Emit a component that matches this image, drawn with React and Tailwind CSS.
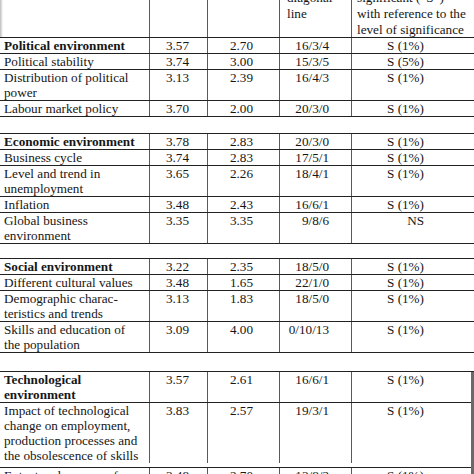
import React from "react";

const GRID = "grid grid-cols-[150px_58px_72px_72px_122px]";
const VB = "border-r border-[#5a5a5a]";

function Row({ lines, bold, a, b, c, d, extra = "", dClass = "" }) {
  return (
    <div className={`${GRID} border-b border-[#222] ${extra}`}>
      <div className={`${VB} pl-[4px] whitespace-nowrap ${bold ? "font-bold" : ""}`}>
        {lines.map((l, i) => (
          <div key={i}>{l}</div>
        ))}
      </div>
      <div className={`${VB} text-right pr-[18px]`}>{a}</div>
      <div className={`${VB} text-right pr-[26px]`}>{b}</div>
      <div className={`${VB} text-right pr-[22px]`}>{c}</div>
      <div className={`text-right pr-[50px] ${dClass}`}>{d}</div>
    </div>
  );
}

function Section({ children }) {
  return <div className="border-t border-[#222]">{children}</div>;
}

export default function App() {
  return (
    <div
      className="relative w-[474px] h-[474px] overflow-hidden bg-white text-[#161616] text-[13.2px] leading-[15px]"
      style={{ fontFamily: '"Liberation Serif", "Times New Roman", serif' }}
    >
      {/* header */}
      <div className={`${GRID} h-[38px] border-b border-[#222] overflow-hidden leading-[16px]`}>
        <div className={`${VB} bg-gradient-to-r from-[#bdbdbd] via-white to-white bg-[length:6px_100%] bg-no-repeat`}></div>
        <div className={VB}></div>
        <div className={VB}></div>
        <div className={`${VB} pl-[7px] -mt-[10px]`}>
          <div>diagonal</div>
          <div>line</div>
        </div>
        <div className="pl-[5px] -mt-[10px] whitespace-nowrap">
          <div>significant (“S”)</div>
          <div>with reference to the</div>
          <div>level of significance</div>
        </div>
      </div>

      <Row lines={["Political environment"]} bold a="3.57" b="2.70" c="16/3/4" d="S (1%)" />
      <Row lines={["Political stability"]} a="3.74" b="3.00" c="15/3/5" d="S (5%)" />
      <Row lines={["Distribution of political", "power"]} a="3.13" b="2.39" c="16/4/3" d="S (1%)" />
      <Row lines={["Labour market policy"]} a="3.70" b="2.00" c="20/3/0" d="S (1%)" />

      <div className="h-[16px]"></div>

      <Section>
        <Row lines={["Economic environment"]} bold a="3.78" b="2.83" c="20/3/0" d="S (1%)" />
        <Row lines={["Business cycle"]} a="3.74" b="2.83" c="17/5/1" d="S (1%)" />
        <Row lines={["Level and trend in", "unemployment"]} a="3.65" b="2.26" c="18/4/1" d="S (1%)" />
        <Row lines={["Inflation"]} a="3.48" b="2.43" c="16/6/1" d="S (1%)" />
        <Row lines={["Global business", "environment"]} a="3.35" b="3.35" c="9/8/6" d="NS" />
      </Section>

      <div className="h-[14px]"></div>

      <Section>
        <Row lines={["Social environment"]} bold a="3.22" b="2.35" c="18/5/0" d="S (1%)" />
        <Row lines={["Different cultural values"]} a="3.48" b="1.65" c="22/1/0" d="S (1%)" />
        <Row lines={["Demographic charac-", "teristics and trends"]} a="3.13" b="1.83" c="18/5/0" d="S (1%)" />
        <Row lines={["Skills and education of", "the population"]} a="3.09" b="4.00" c="0/10/13" d="S (1%)" />
      </Section>

      <div className="h-[18px]"></div>

      <Section>
        <div className="border-r-[3px] border-[#6a6a6a]">
          <Row lines={["Technological", "environment"]} bold a="3.57" b="2.61" c="16/6/1" d="S (1%)" />
          <Row
            lines={[
              "Impact of technological",
              "change on employment,",
              "production processes and",
              "the obsolescence of skills",
            ]}
            extra="pb-[4px]"
            a="3.83"
            b="2.57"
            c="19/3/1"
            d="S (1%)"
          />
          <Row lines={["Extent and manner of ac-", "ceptance"]} a="3.48" b="2.70" c="13/8/2" d="S (1%)" />
        </div>
      </Section>
    </div>
  );
}
